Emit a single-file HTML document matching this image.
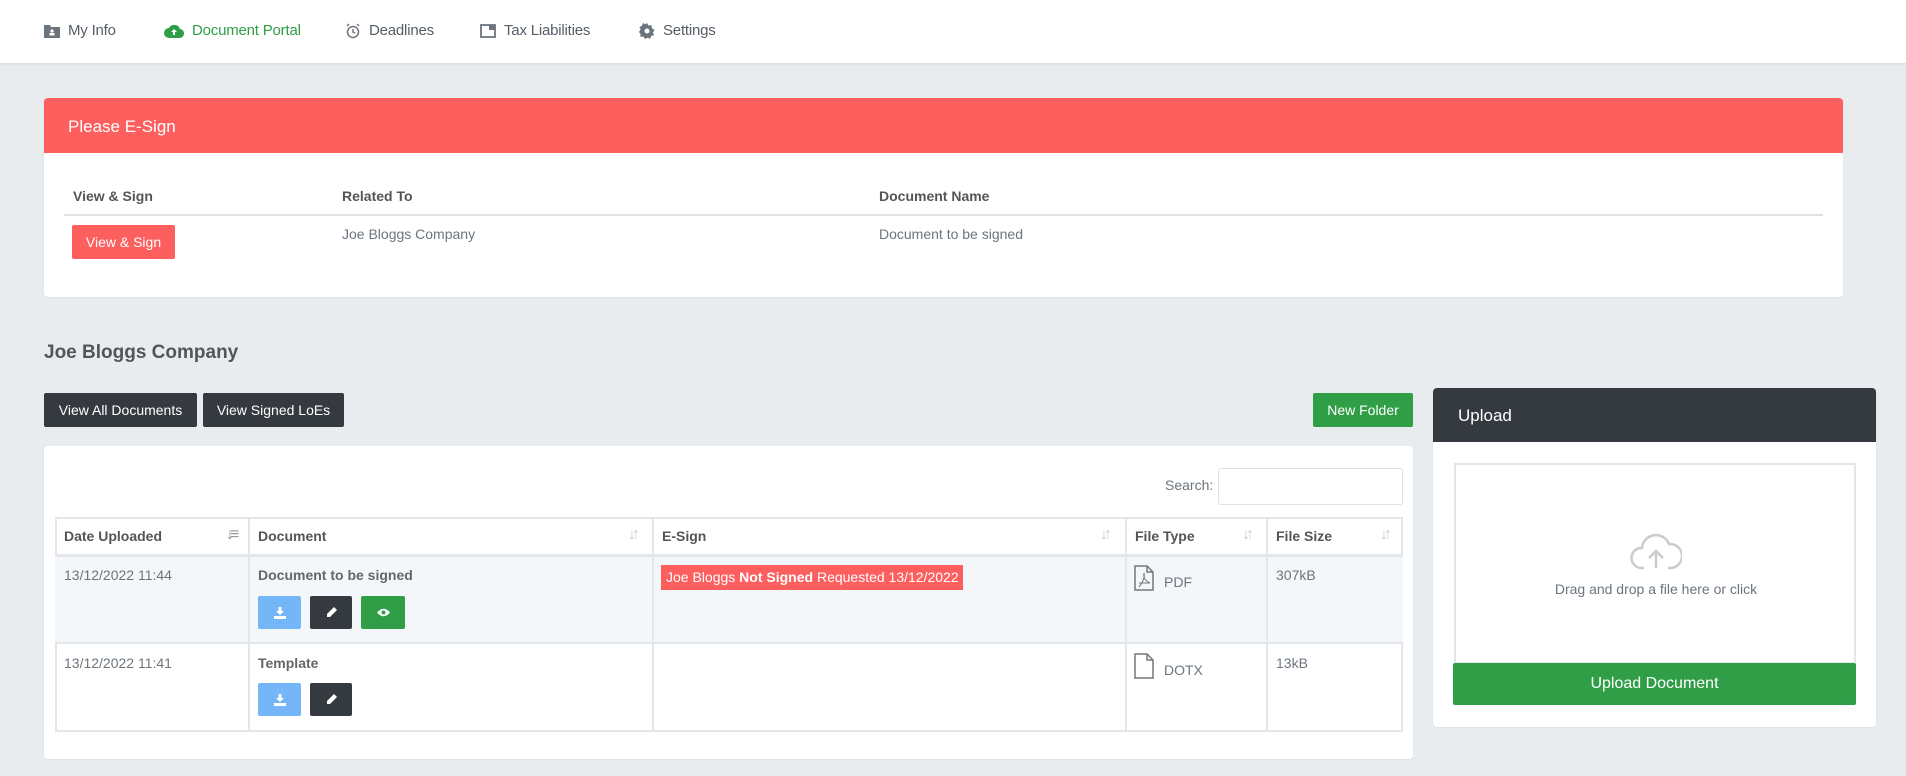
<!DOCTYPE html>
<html><head><meta charset="utf-8"><style>
*{box-sizing:border-box;margin:0;padding:0}
body{width:1906px;height:776px;background:#e9ecef;font-family:"Liberation Sans",sans-serif;color:#6c757d;font-size:14px;position:relative;overflow:hidden}
.a{position:absolute}
.nav{left:0;top:0;width:1906px;height:63px;background:#fff;box-shadow:0 1px 3px rgba(0,0,0,.08)}
.ni{position:absolute;top:22px;font-size:15px;color:#555d66;display:flex;align-items:center;gap:8px;letter-spacing:-0.2px}
.card{background:#fff;border-radius:4px;box-shadow:0 1px 2px rgba(0,0,0,.05)}
.btn{position:absolute;color:#fff;font-size:14px;display:flex;align-items:center;justify-content:center;border-radius:2px}
.th{position:absolute;font-weight:bold;color:#555;font-size:14px}
.sort{position:absolute;color:#ccc;font-size:16px;font-weight:bold;letter-spacing:-4px}
.ib{position:absolute;width:43px;height:33px;border-radius:2px;display:flex;align-items:center;justify-content:center}
</style></head><body>
<div class="a nav">
 <div class="ni" style="left:44px"><svg width="16" height="14" viewBox="0 0 16 14"><path d="M0 1h6l1 2h9v11H0z" fill="#6c757d"/><circle cx="8" cy="7" r="1.6" fill="#fff"/><rect x="5.5" y="9" width="5" height="2.5" fill="#fff"/></svg>My Info</div>
 <div class="ni" style="left:164px;color:#2f9e47"><svg width="20" height="14" viewBox="0 0 20 14"><path d="M5 14a5 5 0 0 1 0-10 6 6 0 0 1 11 1 4.5 4.5 0 0 1-1 9z" fill="#2f9e47"/><path d="M10 5l-3 3h2v3h2V8h2z" fill="#fff"/></svg>Document Portal</div>
 <div class="ni" style="left:345px"><svg width="16" height="16" viewBox="0 0 16 16"><circle cx="8" cy="9" r="5.5" fill="none" stroke="#6c757d" stroke-width="1.5"/><path d="M8 6v3l2 1M2 3l2-2M14 3l-2-2" stroke="#6c757d" stroke-width="1.5" fill="none"/></svg>Deadlines</div>
 <div class="ni" style="left:480px"><svg width="16" height="14" viewBox="0 0 16 14"><rect x="1" y="1" width="14" height="12" fill="none" stroke="#6c757d" stroke-width="1.8"/><rect x="9" y="1" width="6" height="5" fill="#6c757d"/></svg>Tax Liabilities</div>
 <div class="ni" style="left:639px"><svg width="16" height="16" viewBox="0 0 16 16"><path d="M8 0l1.5 2.5 3-.5.3 3L15.5 7 14 9.5l1 2.5-2.8 1-1 2.8-2.7-1L6 16l-1.5-2.5-3 .5L1.5 11 0 9l1.5-2.5L.5 4 3 2.7 4 0l2.5 1.2z" fill="#6c757d"/><circle cx="8" cy="8" r="2.5" fill="#fff"/></svg>Settings</div>
</div>

<div class="a card" style="left:44px;top:98px;width:1799px;height:199px;overflow:hidden">
 <div class="a" style="left:0;top:0;width:100%;height:55px;background:#fd5e5e;color:#fff;font-size:17px;padding:19px 0 0 24px">Please E-Sign</div>
 <div class="th" style="left:29px;top:90px">View &amp; Sign</div>
 <div class="th" style="left:298px;top:90px">Related To</div>
 <div class="th" style="left:835px;top:90px">Document Name</div>
 <div class="a" style="left:20px;top:116px;width:1759px;height:2px;background:#dee2e6"></div>
 <div class="btn" style="left:28px;top:127px;width:103px;height:34px;background:#fd5e5e">View &amp; Sign</div>
 <div class="a" style="left:298px;top:128px">Joe Bloggs Company</div>
 <div class="a" style="left:835px;top:128px">Document to be signed</div>
</div>

<div class="a" style="left:44px;top:342px;font-size:19px;font-weight:bold;color:#555">Joe Bloggs Company</div>
<div class="btn" style="left:44px;top:393px;width:153px;height:34px;background:#343a40">View All Documents</div>
<div class="btn" style="left:203px;top:393px;width:141px;height:34px;background:#343a40">View Signed LoEs</div>
<div class="btn" style="left:1313px;top:393px;width:100px;height:34px;background:#2f9e47">New Folder</div>

<div class="a card" style="left:44px;top:446px;width:1369px;height:313px">
 <div class="a" style="left:1121px;top:31px;font-size:14px">Search:</div>
 <div class="a" style="left:1174px;top:22px;width:185px;height:37px;border:1px solid #dee2e6;border-radius:3px"></div>
 <div class="a" style="left:11px;top:71px;width:1348px;height:215px;border:2px solid #e3e6ea"></div>
 <div class="a" style="left:11px;top:110px;width:1348px;height:88px;background:#f4f7fa"></div>
 <div class="a" style="left:11px;top:108px;width:1348px;height:3px;background:#e3e6ea"></div>
 <div class="a" style="left:11px;top:196px;width:1348px;height:2px;background:#e3e6ea"></div>
 <div class="a" style="left:204px;top:71px;width:2px;height:215px;background:#e3e6ea"></div>
 <div class="a" style="left:608px;top:71px;width:2px;height:215px;background:#e3e6ea"></div>
 <div class="a" style="left:1081px;top:71px;width:2px;height:215px;background:#e3e6ea"></div>
 <div class="a" style="left:1222px;top:71px;width:2px;height:215px;background:#e3e6ea"></div>
 <div class="th" style="left:20px;top:82px">Date Uploaded</div><div class="sort" style="left:182px;top:80px;color:#999">↓≡</div>
 <div class="th" style="left:214px;top:82px">Document</div><div class="sort" style="left:584px;top:80px">↓↑</div>
 <div class="th" style="left:618px;top:82px">E-Sign</div><div class="sort" style="left:1056px;top:80px">↓↑</div>
 <div class="th" style="left:1091px;top:82px">File Type</div><div class="sort" style="left:1198px;top:80px">↓↑</div>
 <div class="th" style="left:1232px;top:82px">File Size</div><div class="sort" style="left:1336px;top:80px">↓↑</div>

 <div class="a" style="left:20px;top:121px">13/12/2022 11:44</div>
 <div class="a" style="left:214px;top:121px;font-weight:bold;color:#666">Document to be signed</div>
 <div class="ib" style="left:214px;top:150px;background:#74b6f7"><svg width="12" height="12" viewBox="0 0 12 12"><path d="M4.5 0h3v4h2.5L6 8 2 4h2.5zM0 9h12v3H0z" fill="#fff"/></svg></div>
 <div class="ib" style="left:266px;top:150px;width:42px;background:#343a40"><svg width="11" height="11" viewBox="0 0 11 11"><path d="M8 0l3 3-7 7H1V7z" fill="#fff"/></svg></div>
 <div class="ib" style="left:317px;top:150px;width:44px;background:#2f9e47"><svg width="13" height="9" viewBox="0 0 13 9"><path d="M0 4.5Q6.5-3 13 4.5 6.5 12 0 4.5z" fill="#fff"/><circle cx="6.5" cy="4.5" r="2" fill="#2f9e47"/></svg></div>
 <div class="a" style="left:617px;top:119px;width:302px;height:25px;background:#fd5e5e;color:#fff;padding:4px 0 0 5px;white-space:nowrap">Joe Bloggs <b>Not Signed</b> Requested 13/12/2022</div>
 <svg class="a" style="left:1090px;top:119px" width="20" height="26" viewBox="0 0 20 26"><path d="M1 1h12l6 6v18H1z M13 1v6h6" fill="none" stroke="#777" stroke-width="1.5"/><path d="M10 8c-1 4 1 8 6 10M10 8c1 4-1 9-5 14M5 18h11" fill="none" stroke="#777" stroke-width="1"/></svg>
 <div class="a" style="left:1120px;top:128px">PDF</div>
 <div class="a" style="left:1232px;top:121px">307kB</div>

 <div class="a" style="left:20px;top:209px">13/12/2022 11:41</div>
 <div class="a" style="left:214px;top:209px;font-weight:bold;color:#666">Template</div>
 <div class="ib" style="left:214px;top:237px;background:#74b6f7"><svg width="12" height="12" viewBox="0 0 12 12"><path d="M4.5 0h3v4h2.5L6 8 2 4h2.5zM0 9h12v3H0z" fill="#fff"/></svg></div>
 <div class="ib" style="left:266px;top:237px;width:42px;background:#343a40"><svg width="11" height="11" viewBox="0 0 11 11"><path d="M8 0l3 3-7 7H1V7z" fill="#fff"/></svg></div>
 <svg class="a" style="left:1090px;top:207px" width="20" height="26" viewBox="0 0 20 26"><path d="M1 1h12l6 6v18H1z M13 1v6h6" fill="none" stroke="#777" stroke-width="1.5"/></svg>
 <div class="a" style="left:1120px;top:216px">DOTX</div>
 <div class="a" style="left:1232px;top:209px">13kB</div>
</div>

<div class="a card" style="left:1433px;top:388px;width:443px;height:339px;overflow:hidden">
 <div class="a" style="left:0;top:0;width:100%;height:54px;background:#343a40;color:#fff;font-size:17px;padding:18px 0 0 25px">Upload</div>
 <div class="a" style="left:21px;top:75px;width:402px;height:201px;border:2px solid #e3e6ea"></div>
 <svg class="a" style="left:197px;top:142px" width="52" height="40" viewBox="0 0 52 40"><path d="M14 38H11A10 10 0 0 1 12 18 14 14 0 0 1 39 14 12 12 0 0 1 41 38H38" fill="none" stroke="#ccc" stroke-width="2.5"/><path d="M26 38V21M19 28l7-7 7 7" fill="none" stroke="#ccc" stroke-width="2.5"/></svg>
 <div class="a" style="left:0;top:193px;width:446px;text-align:center;font-size:14px">Drag and drop a file here or click</div>
 <div class="btn" style="left:20px;top:275px;width:403px;height:42px;background:#2f9e47;font-size:16px">Upload Document</div>
</div>
</body></html>
